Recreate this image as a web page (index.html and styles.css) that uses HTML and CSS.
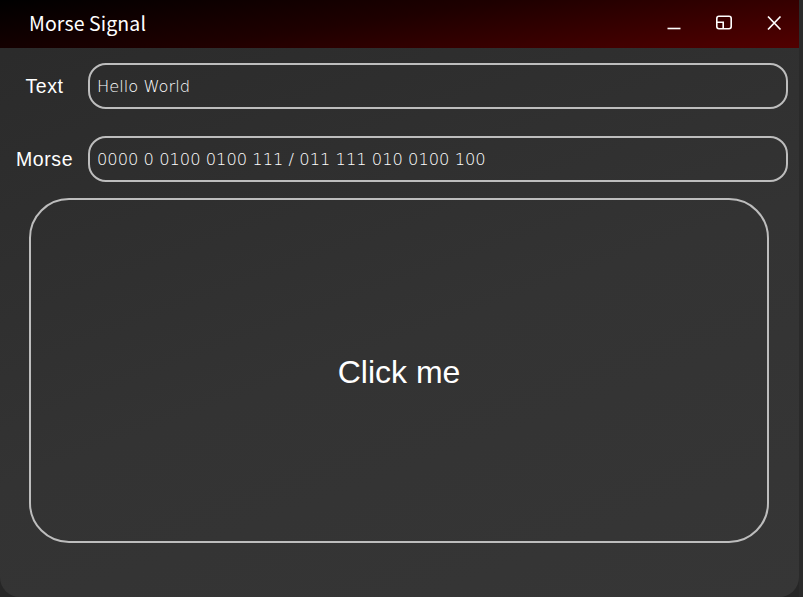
FILE: index.html
```html
<!DOCTYPE html>
<html>
<head>
<meta charset="utf-8">
<link rel="stylesheet" href="styles.css">
</head>
<body>
<div class="desk">
  <div class="window">
    <div class="titlebar">
      <div class="title">Morse Signal</div>
      <div class="controls">
        <div class="ctl">
          <svg width="16" height="16" viewBox="0 0 16 16"><path d="M1.5 13.5H14.5" stroke="#fff" stroke-width="1.6" fill="none"/></svg>
        </div>
        <div class="ctl">
          <svg width="18" height="16" viewBox="0 0 18 16"><rect x="1.8" y="1.3" width="14.4" height="12.4" rx="2.2" stroke="#fff" stroke-width="1.6" fill="none"/><path d="M1.8 7.2H8.2V13.7" stroke="#fff" stroke-width="1.6" fill="none"/></svg>
        </div>
        <div class="ctl">
          <svg width="16" height="16" viewBox="0 0 16 16"><path d="M2 1.5L14.5 14.5M14.5 1.5L2 14.5" stroke="#fff" stroke-width="1.7" fill="none"/></svg>
        </div>
      </div>
    </div>
    <div class="content">
      <div class="row">
        <div class="label">Text</div>
        <div class="field">Hello World</div>
      </div>
      <div class="row">
        <div class="label">Morse</div>
        <div class="field">0000 0 0100 0100 111 / 011 111 010 0100 100</div>
      </div>
      <div class="button">Click me</div>
    </div>
  </div>
  <div class="edge"></div>
</div>
</body>
</html>
```
FILE: styles.css
```css
* { box-sizing: border-box; }
html, body { margin: 0; padding: 0; }
body {
  width: 803px;
  height: 597px;
  overflow: hidden;
  background: #262626;
  font-family: "Liberation Sans", Arial, sans-serif;
}
.desk {
  display: flex;
  width: 803px;
  height: 597px;
}
.window {
  width: 799px;
  height: 597px;
  display: flex;
  flex-direction: column;
  border-radius: 0 0 20px 20px;
  overflow: hidden;
  background: linear-gradient(160deg, #2a2a2a 0%, #333333 55%, #363636 100%);
}
.edge {
  width: 4px;
  height: 597px;
  background: #2a2a2a;
}
.titlebar {
  height: 48px;
  flex: none;
  display: flex;
  align-items: center;
  justify-content: space-between;
  background: linear-gradient(172deg, #000000 0%, #1e0000 45%, #520000 100%);
  color: #fff;
}
.title {
  font-family: "Noto Sans CJK JP", "Liberation Sans", sans-serif;
  font-size: 19.5px;
  padding-left: 29px;
  padding-bottom: 3px;
  letter-spacing: 0.1px;
}
.controls {
  display: flex;
  align-items: center;
  padding-right: 16px;
  gap: 32px;
  padding-bottom: 2px;
}
.ctl {
  width: 18px;
  height: 16px;
  display: flex;
  align-items: center;
  justify-content: center;
}
.content {
  flex: 1;
  display: flex;
  flex-direction: column;
  padding: 15px 11px 0 0;
}
.row {
  display: flex;
  align-items: center;
  height: 46px;
  margin-bottom: 27px;
}
.row + .row { margin-bottom: 16px; }
.label {
  width: 88px;
  text-align: center;
  color: #fff;
  font-size: 19.5px;
  letter-spacing: 0.6px;
  padding-left: 1px;
}
.field {
  flex: 1;
  height: 46px;
  border: 2px solid #bdbdbd;
  border-radius: 18px;
  display: flex;
  align-items: center;
  padding-left: 7px;
  color: #ffffff;
  font-family: "DejaVu Sans", "Noto Sans", sans-serif;
  font-weight: 200;
  font-size: 16.3px;
}
.button {
  margin-left: 29px;
  margin-right: 19px;
  height: 345px;
  border: 2px solid #bdbdbd;
  border-radius: 40px;
  display: flex;
  align-items: center;
  justify-content: center;
  color: #fff;
  font-size: 32px;
  padding-top: 3px;
}
```
